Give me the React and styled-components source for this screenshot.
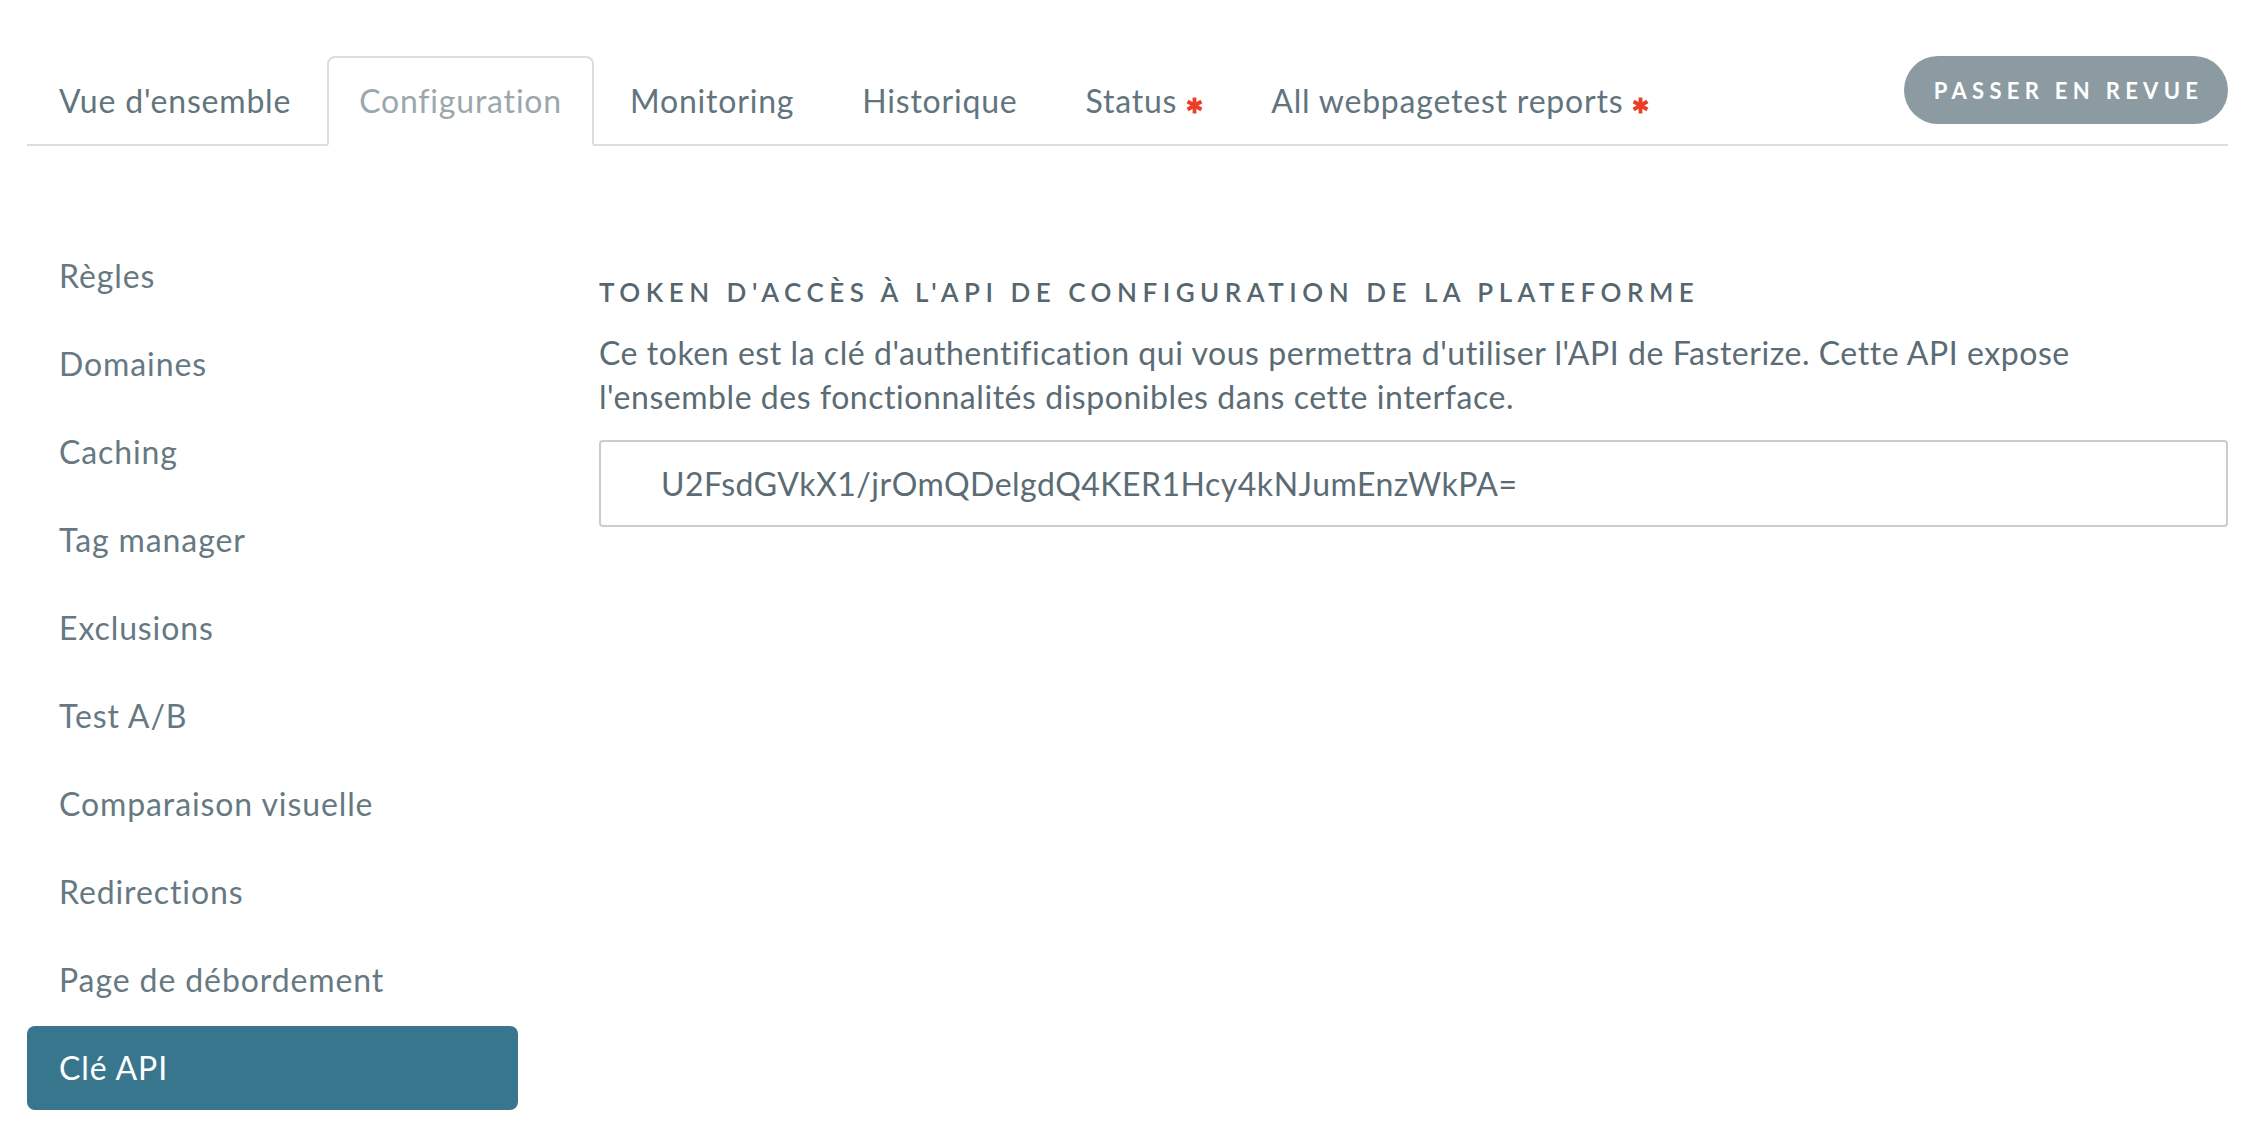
import React from "react";
import styled, { createGlobalStyle } from "styled-components";

const GlobalStyle = createGlobalStyle`
  body {
    margin: 0;
    background: #ffffff;
    font-family: "Lato", "Open Sans", sans-serif;
    color: #62747d;
  }
`;

const tabs = [
  { label: "Vue d'ensemble" },
  { label: "Configuration", active: true },
  { label: "Monitoring" },
  { label: "Historique" },
  { label: "Status", flagged: true },
  { label: "All webpagetest reports", flagged: true },
];

const menu = [
  "Règles",
  "Domaines",
  "Caching",
  "Tag manager",
  "Exclusions",
  "Test A/B",
  "Comparaison visuelle",
  "Redirections",
  "Page de débordement",
  "Clé API",
];

const Asterisk = () => (
  <AsteriskIcon viewBox="0 0 16 16">
    <g stroke="#ea3e27" strokeWidth="3.6">
      <line x1="8" y1="0.5" x2="8" y2="15.5" />
      <line x1="1.5" y1="4.25" x2="14.5" y2="11.75" />
      <line x1="1.5" y1="11.75" x2="14.5" y2="4.25" />
    </g>
  </AsteriskIcon>
);

const App = () => {
  return (
    <>
      <GlobalStyle />
      <Page>
        <Header>
          <Tabs>
            {tabs.map((tab) => (
              <Tab key={tab.label} $active={tab.active}>
                {tab.label}
                {tab.flagged ? <Asterisk /> : null}
              </Tab>
            ))}
          </Tabs>
          <ReviewButton>PASSER EN REVUE</ReviewButton>
        </Header>
        <Main>
          <Sidebar>
            {menu.map((item) => (
              <SideItem key={item} $active={item === "Clé API"}>
                {item}
              </SideItem>
            ))}
          </Sidebar>
          <Content>
            <Title>TOKEN D'ACCÈS À L'API DE CONFIGURATION DE LA PLATEFORME</Title>
            <Description>
              Ce token est la clé d'authentification qui vous permettra d'utiliser l'API de Fasterize. Cette API expose
              l'ensemble des fonctionnalités disponibles dans cette interface.
            </Description>
            <TokenInput type="text" readOnly value="U2FsdGVkX1/jrOmQDelgdQ4KER1Hcy4kNJumEnzWkPA=" />
          </Content>
        </Main>
      </Page>
    </>
  );
};

export default App;

const Page = styled.div`
  padding: 56px 28px 0 27px;
`;

const Header = styled.div`
  display: flex;
  justify-content: space-between;
  align-items: flex-start;
  border-bottom: 2px solid #dddddd;
`;

const Tabs = styled.ul`
  display: flex;
  margin: 0;
  padding: 0;
  list-style: none;
`;

const Tab = styled.li`
  display: flex;
  align-items: center;
  margin: 0 4px -2px 0;
  padding: 21px 30px;
  border: 2px solid transparent;
  border-radius: 8px 8px 0 0;
  font-size: 32px;
  line-height: 44px;
  letter-spacing: 0.8px;
  color: ${(p) => (p.$active ? "#9aa8ae" : "#62747d")};
  background: ${(p) => (p.$active ? "#ffffff" : "transparent")};
  border-color: ${(p) => (p.$active ? "#dddddd #dddddd transparent" : "transparent")};
  cursor: pointer;
`;

const AsteriskIcon = styled.svg`
  width: 17px;
  height: 17px;
  margin: 9px 0 0 9px;
`;

const ReviewButton = styled.button`
  width: 324px;
  height: 68px;
  padding: 0 0 0 5px;
  border: none;
  border-radius: 34px;
  background: #8b9ba1;
  color: #ffffff;
  font-family: "Lato", sans-serif;
  font-size: 22px;
  font-weight: 700;
  letter-spacing: 5.3px;
  cursor: pointer;
`;

const Main = styled.div`
  display: flex;
  align-items: flex-start;
  padding-top: 88px;
`;

const Sidebar = styled.ul`
  display: flex;
  flex-direction: column;
  gap: 4px;
  width: 491px;
  margin: 0 81px 0 0;
  padding: 0;
  list-style: none;
  flex-shrink: 0;
`;

const SideItem = styled.li`
  padding: 20px 32px;
  border-radius: 8px;
  font-size: 32px;
  line-height: 44px;
  letter-spacing: 0.9px;
  color: ${(p) => (p.$active ? "#ffffff" : "#667982")};
  background: ${(p) => (p.$active ? "#38768d" : "transparent")};
  cursor: pointer;
`;

const Content = styled.div`
  flex: 1;
  padding-top: 40px;
`;

const Title = styled.h4`
  margin: 0 0 21px;
  font-size: 26px;
  line-height: 36px;
  font-weight: 600;
  letter-spacing: 5.5px;
  color: #56666f;
`;

const Description = styled.p`
  max-width: 1560px;
  margin: 0 0 21px;
  font-size: 32px;
  line-height: 44px;
  letter-spacing: 0.55px;
  color: #5b6c75;
`;

const TokenInput = styled.input`
  box-sizing: border-box;
  width: 100%;
  height: 87px;
  padding: 0 60px;
  border: 2px solid #cccccc;
  border-radius: 4px;
  font-family: "Lato", sans-serif;
  font-size: 32px;
  letter-spacing: 0.5px;
  color: #5b6c75;
  outline: none;
`;
